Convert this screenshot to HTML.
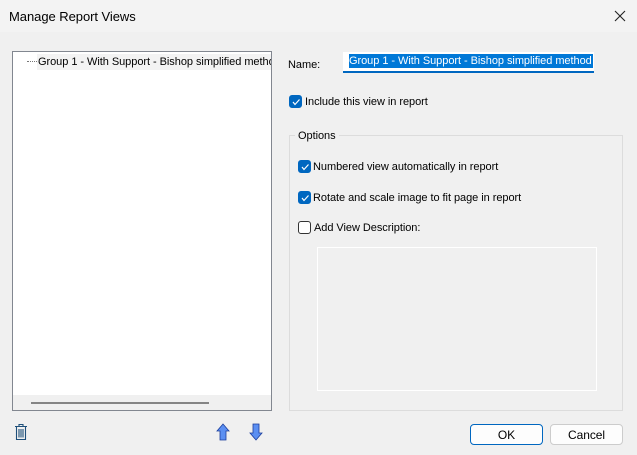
<!DOCTYPE html>
<html><head><style>
body{margin:0;width:637px;height:455px;background:#f0f0f0;font-family:"Liberation Sans",sans-serif;font-size:11px;letter-spacing:-0.05px;color:#000;position:relative;overflow:hidden}
.a{position:absolute;white-space:nowrap}
.t{margin-top:1px}
.cb{position:absolute;width:13px;height:13px;border-radius:3px;background:#0067c0;border:1px solid #0067c0;box-sizing:border-box}
.cb svg{position:absolute;left:1px;top:1px}
.un{background:#fff;border:1px solid #333}
.btn{position:absolute;height:19px;background:#fdfdfd;border:1px solid #ccc;border-radius:4px;text-align:center;line-height:20px;font-size:12px}
</style></head><body>
<div class="a" style="left:0;top:0;width:637px;height:32px;background:#f3f3f3"></div>
<div class="a" style="left:9px;top:9px;font-size:13px">Manage Report Views</div>
<svg class="a" style="left:614px;top:10px" width="12" height="12"><path d="M1 1L11 11M11 1L1 11" stroke="#222" stroke-width="1.1"/></svg>

<div class="a" style="left:12px;top:51px;width:258px;height:358px;background:#fff;border:1px solid #828790;overflow:hidden">
  <div class="a" style="left:14px;top:9px;width:10px;border-top:1px dotted #777"></div>
  <div class="a" style="left:24px;top:2px;height:16px;line-height:17px;background:#f3f3f3;padding-left:1px;width:240px">Group 1 - With Support - Bishop simplified method</div>
  <div class="a" style="left:0;top:343px;width:258px;height:16px;background:#f0f0f0"></div>
  <div class="a" style="left:18px;top:350px;width:178px;height:2px;background:#858585"></div>
</div>

<div class="a" style="left:288px;top:59px">Name:</div>
<div class="a" style="left:343px;top:52px;width:251px;height:19px;background:#fff;border-bottom:2px solid #0067c0"></div>
<div class="a" style="left:349px;top:54px;background:#0078d7;color:#fff;height:14px;line-height:15px;padding-right:1px">Group 1 - With Support - Bishop simplified method</div>

<div class="cb" style="left:289px;top:95px"><svg width="10" height="10"><path d="M2 5L4 7.5L8.5 2.5" stroke="#fff" stroke-width="1.2" fill="none"/></svg></div>
<div class="a" style="left:305px;top:96px">Include this view in report</div>

<div class="a" style="left:289px;top:135px;width:332px;height:274px;border:1px solid #dcdcdc"></div>
<div class="a" style="left:295px;top:130px;background:#f0f0f0;padding:0 3px">Options</div>

<div class="cb" style="left:298px;top:160px"><svg width="10" height="10"><path d="M2 5L4 7.5L8.5 2.5" stroke="#fff" stroke-width="1.2" fill="none"/></svg></div>
<div class="a" style="left:313px;top:161px">Numbered view automatically in report</div>
<div class="cb" style="left:298px;top:191px"><svg width="10" height="10"><path d="M2 5L4 7.5L8.5 2.5" stroke="#fff" stroke-width="1.2" fill="none"/></svg></div>
<div class="a" style="left:313px;top:192px">Rotate and scale image to fit page in report</div>
<div class="cb un" style="left:298px;top:221px"></div>
<div class="a" style="left:314px;top:222px">Add View Description:</div>
<div class="a" style="left:317px;top:247px;width:278px;height:142px;border:1px solid #fff"></div>

<svg class="a" style="left:13px;top:423px" width="16" height="18"><path d="M2 3.5H14M6 3.5V1.5H10V3.5M3.5 4V16.5H12.5V4M6 6V14.5M8 6V14.5M10 6V14.5" stroke="#1e4f7a" stroke-width="1.1" fill="none"/></svg>
<svg class="a" style="left:216px;top:423px" width="14" height="18"><path d="M7 1L13 8H10V17H4V8H1Z" fill="#5b8ff2" stroke="#1c3e9c" stroke-width="0.8"/></svg>
<svg class="a" style="left:249px;top:423px" width="14" height="18"><path d="M7 17L13 10H10V1H4V10H1Z" fill="#5b8ff2" stroke="#1c3e9c" stroke-width="0.8"/></svg>

<div class="btn" style="left:470px;top:424px;width:71px;border-color:#0067c0">OK</div>
<div class="btn" style="left:550px;top:424px;width:71px">Cancel</div>
</body></html>
